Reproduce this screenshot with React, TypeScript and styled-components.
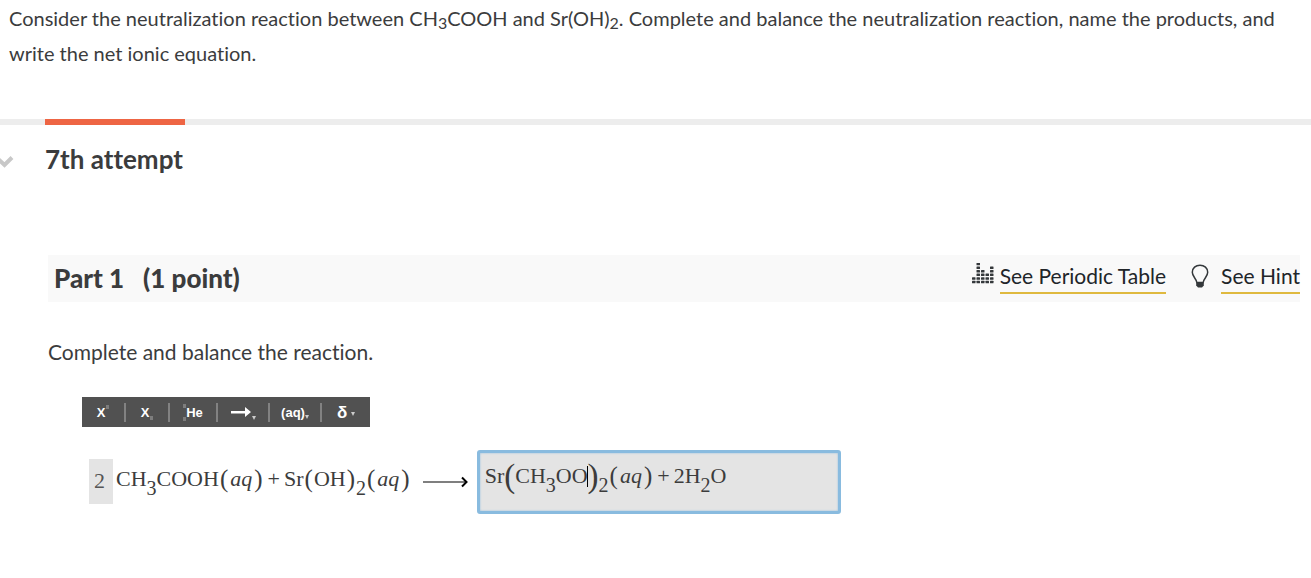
import React from "react";
import styled, { createGlobalStyle } from "styled-components";

const GlobalStyle = createGlobalStyle`
  * { box-sizing: border-box; }
  body {
    margin: 0;
    background: #fff;
    color: #3b3c3d;
    font-family: Lato, "Liberation Sans", sans-serif;
    font-variant-ligatures: none;
    overflow-x: hidden;
  }
`;

const Prompt = styled.p`
  margin: 0;
  padding: 1px 10px 0 9px;
  font-size: 20px;
  line-height: 35px;
`;

const Sub = styled.sub`
  font-size: 16px;
  line-height: 0;
  vertical-align: -3px;
`;

const AttemptBar = styled.div`
  height: 6px;
  margin-top: 48px;
  padding-left: 45px;
  background: #ededed;
`;

const AttemptMarker = styled.div`
  width: 140px;
  height: 6px;
  background: #ee6544;
`;

const AttemptRow = styled.header`
  display: flex;
  align-items: center;
  height: 68px;
`;

const Collapse = styled.button`
  width: 45px;
  height: 20px;
  padding: 0;
  border: 0;
  background: none;
  text-align: left;
  svg { display: block; }
`;

const AttemptTitle = styled.h2`
  margin: 0;
  font-size: 26px;
  line-height: 32px;
  font-weight: 700;
`;

const Part = styled.section`
  padding: 62px 11px 0 48px;
`;

const PartHeader = styled.div`
  display: flex;
  justify-content: space-between;
  align-items: center;
  height: 47px;
  padding: 0 0 2px 6px;
  background: #f9f9f9;
`;

const PartTitle = styled.h3`
  display: flex;
  gap: 19px;
  margin: 0;
  font-size: 26px;
  line-height: 32px;
  font-weight: 900;
`;

const Resources = styled.nav`
  display: flex;
  gap: 25px;
`;

const Resource = styled.div`
  display: flex;
  align-items: center;
`;

const ResourceLink = styled.a`
  padding-bottom: 1px;
  border-bottom: 2px solid #dfb93f;
  color: #212529;
  font-size: 21px;
  line-height: 30px;
  text-decoration: none;
  white-space: nowrap;
`;

const IconSlot = styled.span<{ $width: number }>`
  display: flex;
  width: ${(p) => p.$width}px;
  height: 30px;
`;

const Instruction = styled.p`
  margin: 35px 0 0;
  font-size: 21px;
  line-height: 30px;
`;

const Toolbar = styled.div`
  display: flex;
  align-items: center;
  width: max-content;
  height: 30px;
  margin: 30px 0 0 34px;
  background: #515151;
`;

const Tool = styled.button<{ $width: number }>`
  display: flex;
  align-items: center;
  justify-content: center;
  width: ${(p) => p.$width}px;
  height: 19px;
  padding: 0;
  border: 0;
  border-right: 2px solid #828282;
  background: none;
  color: #fff;
  font: 700 13px/21px "Liberation Sans", sans-serif;
  &:last-child { border-right: 0; }
`;

const Slot = styled.i<{ $low?: boolean }>`
  width: 3px;
  height: 4px;
  margin-top: ${(p) => (p.$low ? 11 : 0)}px;
  margin-bottom: ${(p) => (p.$low ? 0 : 10)}px;
  margin-left: 1px;
  background: #7d7d7d;
`;

const SlotPair = styled.span`
  display: flex;
  flex-direction: column;
  justify-content: space-between;
  width: 3px;
  height: 17px;
  i { margin: 0; }
`;

const Delta = styled.span`
  font-size: 17px;
`;

const Equation = styled.div`
  display: flex;
  align-items: flex-start;
  margin: 23px 0 0 41px;
  color: #3c3c3c;
  font-family: "Liberation Serif", serif;
  font-size: 22px;
`;

const Coefficient = styled.input`
  width: 24px;
  height: 45px;
  margin-top: 9px;
  padding: 0 0 2px 5px;
  border: 0;
  background: #e4e4e4;
  color: #555;
  font: inherit;
`;

const Formula = styled.span`
  display: flex;
  align-items: center;
  height: 46px;
  white-space: pre;
`;

const Reactants = styled(Formula)`
  margin: 6px 0 0 3px;
`;

const Index = styled.sub`
  font-size: 20px;
  line-height: 24px;
  padding-top: 18px;
`;

const Paren = styled.span<{ $tall?: boolean }>`
  padding: 0 ${(p) => (p.$tall ? 0 : 1)}px;
  font-size: ${(p) => (p.$tall ? 33 : 25)}px;
`;

const State = styled.i`
  padding: 0 1px;
`;

const Plus = styled.span`
  padding: 0 4px;
`;

const Arrow = styled.svg`
  flex: none;
  margin: 25px 8px 0 12px;
`;

const Answer = styled.div`
  width: 364px;
  height: 64px;
  padding-left: 5px;
  border: 3px solid #89bbdf;
  border-radius: 3px;
  background: #e4e4e4;
  box-shadow: inset 0 0 2px #89bbdf;
  outline: none;
`;

const Caret = styled.span`
  width: 1px;
  height: 21px;
  margin-left: -1px;
  background: #000;
`;

const bars = [2, 6, 4, 3, 5];

const TableIcon = () => (
  <svg width="22" height="22" viewBox="0 0 22 22" aria-hidden="true">
    {bars.map((n, col) =>
      Array.from({ length: n }, (_, row) => (
        <rect key={`${col}-${row}`} x={col * 4.5} y={17.8 - row * 3.6} width="3.5" height="2.5" rx="0.5" fill="#34383b" />
      ))
    )}
  </svg>
);

const BulbIcon = () => (
  <svg width="18" height="26" viewBox="0 0 18 26" fill="none" aria-hidden="true">
    <path d="M5.8 19.5C5.4 15.5 1.3 13.5 1.3 9.3C1.3 5 4.7 2.2 9 2.2S16.7 5 16.7 9.3C16.7 13.5 12.6 15.5 12.2 19.5Z" stroke="#34383b" strokeWidth="1.5" />
    <path d="M5.2 20H12.8V22.4L11 24.6H7L5.2 22.4Z" fill="#34383b" />
  </svg>
);

const Drop = ({ top }: { top: number }) => (
  <svg width="4" height={top * 2 + 4} viewBox={`0 0 4 ${top * 2 + 4}`} aria-hidden="true">
    <path d={`M0 ${top * 2}H4L2 ${top * 2 + 4}Z`} fill="#ccc" />
  </svg>
);

export default function App() {
  return (
    <>
      <GlobalStyle />
      <main>
        <Prompt>
          Consider the neutralization reaction between CH<Sub>3</Sub>COOH and Sr(OH)<Sub>2</Sub>. Complete and
          balance the neutralization reaction, name the products, and write the net ionic equation.
        </Prompt>
        <AttemptBar>
          <AttemptMarker />
        </AttemptBar>
        <AttemptRow>
          <Collapse aria-label="Collapse attempt">
            <svg width="14" height="24" viewBox="0 0 14 24" aria-hidden="true">
              <path d="M-3.5 8.5L4.5 16L12 8.5" fill="none" stroke="#c8c8c8" strokeWidth="4" />
            </svg>
          </Collapse>
          <AttemptTitle>7th attempt</AttemptTitle>
        </AttemptRow>
        <Part>
          <PartHeader>
            <PartTitle>
              <span>Part 1</span>
              <span>(1 point)</span>
            </PartTitle>
            <Resources>
              <Resource>
                <IconSlot $width={28}>
                  <TableIcon />
                </IconSlot>
                <ResourceLink href="#table">See Periodic Table</ResourceLink>
              </Resource>
              <Resource>
                <IconSlot $width={30}>
                  <BulbIcon />
                </IconSlot>
                <ResourceLink href="#hint">See Hint</ResourceLink>
              </Resource>
            </Resources>
          </PartHeader>
          <Instruction>Complete and balance the reaction.</Instruction>
          <Toolbar role="toolbar" aria-label="Equation tools">
            <Tool $width={44} aria-label="Superscript">
              X<Slot />
            </Tool>
            <Tool $width={44} aria-label="Subscript">
              X<Slot $low />
            </Tool>
            <Tool $width={48} aria-label="Isotope">
              <SlotPair>
                <Slot />
                <Slot />
              </SlotPair>
              He
            </Tool>
            <Tool $width={52} aria-label="Arrows">
              <svg width="21" height="12" viewBox="0 0 21 12" aria-hidden="true">
                <path d="M0 5H14V1L20 6L14 11V7.5H0Z" fill="#fff" />
              </svg>
              <Drop top={6} />
            </Tool>
            <Tool $width={52} aria-label="States">
              (aq)
              <Drop top={5} />
            </Tool>
            <Tool $width={48} aria-label="Greek letters">
              <Delta>δ</Delta>&nbsp;
              <Drop top={2} />
            </Tool>
          </Toolbar>
          <Equation>
            <Coefficient aria-label="Coefficient" defaultValue="2" />
            <Reactants>
              CH<Index>3</Index>COOH<Paren>(</Paren><State>aq</State><Paren>)</Paren>
              <Plus>+</Plus>Sr<Paren>(</Paren>OH<Paren>)</Paren><Index>2</Index>
              <Paren>(</Paren><State>aq</State><Paren>)</Paren>
            </Reactants>
            <Arrow width="46" height="14" viewBox="0 0 46 14" aria-label="yields">
              <path d="M0 7H43" stroke="#555" strokeWidth="1.5" />
              <path d="M39 2.5L43.5 7L39 11.5" fill="none" stroke="#000" strokeWidth="2" />
            </Arrow>
            <Answer role="textbox" aria-label="Products" tabIndex={0}>
              <Formula>
                Sr<Paren $tall>(</Paren>CH<Index>3</Index>OO<Caret /><Paren $tall>)</Paren><Index>2</Index>
                <Paren>(</Paren><State>aq</State><Paren>)</Paren>
                <Plus>+</Plus>2H<Index>2</Index>O
              </Formula>
            </Answer>
          </Equation>
        </Part>
      </main>
    </>
  );
}
